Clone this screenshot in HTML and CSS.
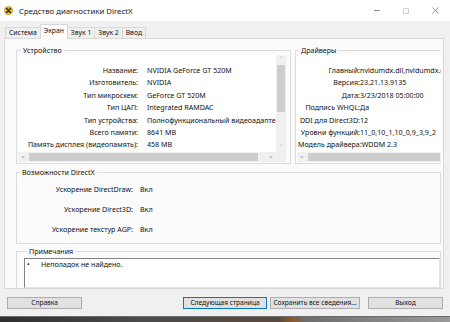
FILE: index.html
```html
<!DOCTYPE html>
<html lang="ru">
<head>
    <meta charset="UTF-8">
    <meta name="viewport" content="width=device-width, initial-scale=1.0">
    <link rel="stylesheet" href="styles.css">
    <title>Средство диагностики DirectX</title>
</head>
<body>

    <div class="window">
        <div class="titlebar">
            <svg class="app-icon" width="9" height="9" viewBox="0 0 10 10">
                <circle cx="5" cy="5" r="4.6" fill="#f2c200" stroke="#b58a00" stroke-width="0.6"/>
                <path d="M2.8 2.8 L7.2 7.2 M7.2 2.8 L2.8 7.2" stroke="#1d2b52" stroke-width="1.6" stroke-linecap="round"/>
            </svg>
            <span class="title">Средство диагностики DirectX</span>
            <div class="controls">
                <span class="ctl ctl-min"></span>
                <span class="ctl ctl-max"></span>
                <svg class="ctl-close" width="7" height="7" viewBox="0 0 7 7">
                    <path d="M0.5 0.5 L6.5 6.5 M6.5 0.5 L0.5 6.5" stroke="#7a7a7a" stroke-width="0.8"/>
                </svg>
            </div>
        </div>

        <div class="tabs">
            <div class="tab">Система</div>
            <div class="tab active">Экран</div>
            <div class="tab">Звук 1</div>
            <div class="tab">Звук 2</div>
            <div class="tab">Ввод</div>
        </div>

        <div class="panel">
            <div class="top-row">
                <fieldset class="group group-device">
                    <legend>Устройство</legend>
                    <div class="listbox">
                        <div class="list-main">
                            <div class="row"><span class="lbl">Название:</span><span class="val">NVIDIA GeForce GT 520M</span></div>
                            <div class="row"><span class="lbl">Изготовитель:</span><span class="val">NVIDIA</span></div>
                            <div class="row"><span class="lbl">Тип микросхем:</span><span class="val">GeForce GT 520M</span></div>
                            <div class="row"><span class="lbl">Тип ЦАП:</span><span class="val">Integrated RAMDAC</span></div>
                            <div class="row"><span class="lbl">Тип устройства:</span><span class="val">Полнофункциональный видеоадапте</span></div>
                            <div class="row"><span class="lbl">Всего памяти:</span><span class="val">8641 MB</span></div>
                            <div class="row"><span class="lbl">Память дисплея (видеопамять):</span><span class="val">458 MB</span></div>
                        </div>
                        <div class="vscroll">
                            <span class="arrow">&#708;</span>
                            <div class="vtrack"><div class="vthumb"></div></div>
                            <span class="arrow">&#709;</span>
                        </div>
                        <div class="hscroll">
                            <span class="arrow">&lt;</span>
                            <div class="htrack"><div class="hthumb"></div></div>
                            <span class="arrow">&gt;</span>
                        </div>
                        <div class="corner"></div>
                    </div>
                </fieldset>

                <fieldset class="group group-drivers">
                    <legend>Драйверы</legend>
                    <div class="drv-list">
                        <div class="drv-main">
                            <div class="drow"><span class="dlbl">Главный:</span><span>nvldumdx.dll,nvldumdx.dll</span></div>
                            <div class="drow"><span class="dlbl">Версия:</span><span>23.21.13.9135</span></div>
                            <div class="drow"><span class="dlbl">Дата:</span><span>3/23/2018 05:00:00</span></div>
                            <div class="drow"><span class="dlbl">Подпись WHQL:</span><span>Да</span></div>
                            <div class="drow"><span class="dlbl">DDI для Direct3D:</span><span>12</span></div>
                            <div class="drow"><span class="dlbl">Уровни функций:</span><span>11_0,10_1,10_0,9_3,9_2</span></div>
                            <div class="drow"><span class="dlbl">Модель драйвера:</span><span>WDDM 2.3</span></div>
                        </div>
                        <div class="hscroll drv-hscroll">
                            <span class="arrow">&lt;</span>
                            <div class="htrack"><div class="hthumb full"></div></div>
                        </div>
                    </div>
                </fieldset>
            </div>

            <fieldset class="group group-dx">
                <legend>Возможности DirectX</legend>
                <div class="dx-row"><span class="dx-lbl">Ускорение DirectDraw:</span><span>Вкл</span></div>
                <div class="dx-row"><span class="dx-lbl">Ускорение Direct3D:</span><span>Вкл</span></div>
                <div class="dx-row"><span class="dx-lbl">Ускорение текстур AGP:</span><span>Вкл</span></div>
            </fieldset>

            <fieldset class="group group-notes">
                <legend>Примечания</legend>
                <div class="notes">
                    <span class="bullet">&bull;</span>
                    <span>Неполадок не найдено.</span>
                </div>
            </fieldset>
        </div>

        <div class="buttons">
            <button class="btn btn-help">Справка</button>
            <button class="btn btn-next">Следующая страница</button>
            <button class="btn btn-save">Сохранить все сведения...</button>
            <button class="btn btn-exit">Выход</button>
        </div>
    </div>

    <div class="desktop"></div>

</body>
</html>
```

FILE: styles.css
```css
body {
    margin: 0;
    width: 450px;
    height: 322px;
    overflow: hidden;
    font-family: 'Noto Sans', 'Open Sans', sans-serif;
    font-size: 7.1px;
    color: #111;
    background-color: #3a3a3a;
}

.window {
    height: 316px;
    background-color: #f0f0f0;
    box-sizing: border-box;
}

/* barre de titre */
.titlebar {
    height: 21px;
    background-color: #fff;
    display: flex;
    align-items: center;
    padding-left: 4px;
}

.app-icon {
    margin-right: 6px;
}

.title {
    font-size: 7.8px;
    color: #1a1a1a;
}

.controls {
    margin-left: auto;
    display: flex;
    align-items: center;
}

.ctl-min {
    width: 6px;
    height: 1px;
    background-color: #8c8c8c;
    margin-right: 23px;
}

.ctl-max {
    width: 6px;
    height: 6px;
    border: 1px solid #d2d2d2;
    box-sizing: border-box;
    margin-right: 23px;
}

.ctl-close {
    margin-right: 11px;
}

/* onglets */
.tabs {
    display: flex;
    align-items: flex-end;
    height: 13px;
    margin-top: 4px;
    padding-left: 5px;
    position: relative;
    z-index: 1;
}

.tab {
    height: 10px;
    line-height: 9px;
    padding: 0 3px;
    font-size: 6.8px;
    border: 1px solid #d9d9d9;
    border-bottom: none;
    background-color: #f0f0f0;
    margin-right: -1px;
}

.tab.active {
    height: 14px;
    line-height: 11px;
    background-color: #fff;
    margin-bottom: -1px;
}

.panel {
    margin-left: 4px;
    width: 440px;
    height: 251px;
    box-sizing: border-box;
    border: 1px solid #d9d9d9;
    background-color: #fbfbfb;
    padding: 6px 2px 0 11px;
    overflow: hidden;
}

/* cadres */
.group {
    margin: 0;
    padding: 0;
    border: 1px solid #dcdcdc;
    min-width: 0;
}

.group legend {
    padding: 0 2px;
    margin-left: 3px;
    line-height: 10px;
    font-size: 7.1px;
}

.top-row {
    display: flex;
    gap: 4px;
    height: 119px;
}

.group-device {
    width: 275px;
    box-sizing: border-box;
    padding: 0 4px 0 1px;
}

.group-drivers {
    width: 146px;
    box-sizing: border-box;
    padding: 0;
    border-right: none;
}

.listbox {
    display: grid;
    grid-template-columns: 1fr 10px;
    grid-template-rows: 97px 10px;
    background-color: #fff;
}

.list-main {
    padding-top: 9px;
    overflow: hidden;
}

.row {
    display: flex;
    height: 12.4px;
    line-height: 12.4px;
    white-space: nowrap;
}

.lbl {
    width: 120px;
    flex-shrink: 0;
    text-align: right;
    margin-right: 9px;
}

.val {
    overflow: hidden;
}

.vscroll {
    display: flex;
    flex-direction: column;
    align-items: center;
    background-color: #f0f0f0;
}

.arrow {
    height: 9px;
    line-height: 9px;
    font-size: 6px;
    color: #606060;
    text-align: center;
    width: 10px;
}

.vtrack {
    flex: 1;
    width: 8px;
    padding-top: 1px;
}

.vthumb {
    height: 47px;
    background-color: #cdcdcd;
}

.hscroll {
    display: flex;
    align-items: center;
    background-color: #f0f0f0;
}

.htrack {
    flex: 1;
    height: 8px;
    padding-left: 1px;
}

.hthumb {
    width: 229px;
    height: 8px;
    background-color: #cdcdcd;
}

.hthumb.full {
    width: 132px;
}

.corner {
    background-color: #f0f0f0;
}

.drv-list {
    padding-left: 1px;
    background-color: #fff;
}

.drv-main {
    height: 97px;
    padding-top: 9px;
    box-sizing: border-box;
    overflow: hidden;
}

.drow {
    display: flex;
    height: 12.4px;
    line-height: 12.4px;
    white-space: nowrap;
    padding-left: 1px;
}

.dlbl {
    min-width: 62px;
    text-align: right;
    flex-shrink: 0;
}

.drv-hscroll {
    height: 10px;
}

.group-dx {
    margin-top: 3px;
    height: 77px;
    box-sizing: border-box;
    padding-top: 2px;
}

.dx-row {
    display: flex;
    height: 20px;
    line-height: 20px;
}

.dx-lbl {
    width: 116px;
    text-align: right;
    margin-right: 7px;
}

.group-notes {
    margin-top: 2px;
    height: 44px;
    box-sizing: border-box;
    padding: 2px 0 0 7px;
    border-bottom: none;
}

.notes {
    height: 30px;
    box-sizing: border-box;
    border: 1px solid #a0a0a0;
    border-color: #828282 #e3e3e3 #e3e3e3 #828282;
    background-color: #fff;
    display: flex;
    line-height: 9px;
    padding: 1px 0 0 2px;
}

.bullet {
    width: 14px;
}

/* boutons */
.buttons {
    display: flex;
    margin-top: 8px;
    padding-left: 7px;
}

.btn {
    height: 12px;
    padding: 0;
    font-family: inherit;
    font-size: 6.6px;
    line-height: 10px;
    white-space: nowrap;
    color: #111;
    background-color: #e1e1e1;
    border: 1px solid #adadad;
}

.btn-help {
    width: 75px;
}

.btn-next {
    width: 84px;
    margin-left: 101px;
    border-color: #0078d7;
}

.btn-save {
    width: 90px;
    margin-left: 3px;
}

.btn-exit {
    width: 75px;
    margin-left: 8px;
}

.desktop {
    height: 6px;
    border-top: 1px solid #6b6b6b;
    background: linear-gradient(to right, #2f2f2f 0%, #4a4a4a 30%, #5a4a3e 62%, #8a5a2e 65%, #6e6e6e 68%, #9a9a9a 100%);
}
```
